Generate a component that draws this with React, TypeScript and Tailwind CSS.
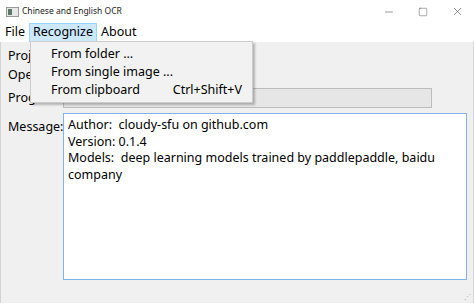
import { Minus, Square, X } from 'lucide-react'

const font = { fontFamily: '"Noto Sans", "Open Sans", sans-serif' }

function TitleBar() {
  return (
    <div className="flex h-[23px] items-center bg-white">
      <div className="ml-[6px] flex h-[10px] w-[13px] items-center border border-[#9a9a9a] bg-[#e8e8e8]">
        <div className="ml-[1px] h-[6px] w-[4px] bg-[#5a7a6a]" />
      </div>
      <span className="ml-[3px] text-[8.5px] text-[#222]">Chinese and English OCR</span>
      <div className="ml-auto flex items-center text-[#333]">
        <div className="flex w-[34px] justify-center"><Minus size={12} strokeWidth={1} /></div>
        <div className="flex w-[34px] justify-center"><Square size={10} strokeWidth={1} /></div>
        <div className="flex w-[34px] justify-center"><X size={13} strokeWidth={1} /></div>
      </div>
    </div>
  )
}

function MenuBar() {
  return (
    <div className="flex h-[19px] items-stretch bg-white pl-[1px] text-[12.5px] text-black">
      <div className="flex items-center px-[4px]">File</div>
      <div className="flex items-center border border-[#99d1ff] bg-[#cce8ff] px-[3px]">Recognize</div>
      <div className="flex items-center px-[4px]">About</div>
    </div>
  )
}

function Dropdown() {
  const items = [
    { label: 'From folder ...', shortcut: '' },
    { label: 'From single image ...', shortcut: '' },
    { label: 'From clipboard', shortcut: 'Ctrl+Shift+V' },
  ]
  return (
    <div className="absolute left-[30px] top-[41px] w-[223px] border border-[#cccccc] bg-[#f2f2f2] py-[3px] text-[12.5px] shadow-[2px_2px_2px_rgba(0,0,0,0.25)]">
      {items.map((item) => (
        <div key={item.label} className="flex h-[18px] items-center pl-[20px] pr-[10px]">
          <span>{item.label}</span>
          {item.shortcut && <span className="ml-auto">{item.shortcut}</span>}
        </div>
      ))}
    </div>
  )
}

export default function App() {
  return (
    <div className="relative flex h-[306px] w-[474px] flex-col overflow-hidden bg-white text-black" style={font}>
      <TitleBar />
      <MenuBar />
      <div className="flex flex-1 flex-col border-x border-[#d4d4d4] bg-[#f0f0f0] pl-[7px] pr-[6px] text-[12.5px]">
        <div className="mt-[5px] flex h-[19px] items-center">Project:</div>
        <div className="flex h-[19px] items-center">Open:</div>
        <div className="mt-[2px] flex h-[22px] items-center">
          <span className="w-[55px]">Progress:</span>
          <div className="h-[20px] w-[369px] border border-[#bcbcbc] bg-[#e6e6e6]" />
        </div>
        <div className="mt-[4px] flex">
          <span className="mt-[5px] w-[55px]">Message:</span>
          <div className="h-[167px] w-[404px] border border-[#7eb4ea] bg-white px-[4px] py-[3px] leading-[16.5px]">
            Author:&nbsp; cloudy-sfu on github.com
            <br />
            Version: 0.1.4
            <br />
            Models:&nbsp; deep learning models trained by paddlepaddle, baidu company
          </div>
        </div>
        <div className="mt-auto mb-[3px] ml-auto mr-[-4px] text-[7px] leading-none text-[#aaa]">⋰</div>
      </div>
      <div className="h-[3px] bg-white" />
      <Dropdown />
    </div>
  )
}
